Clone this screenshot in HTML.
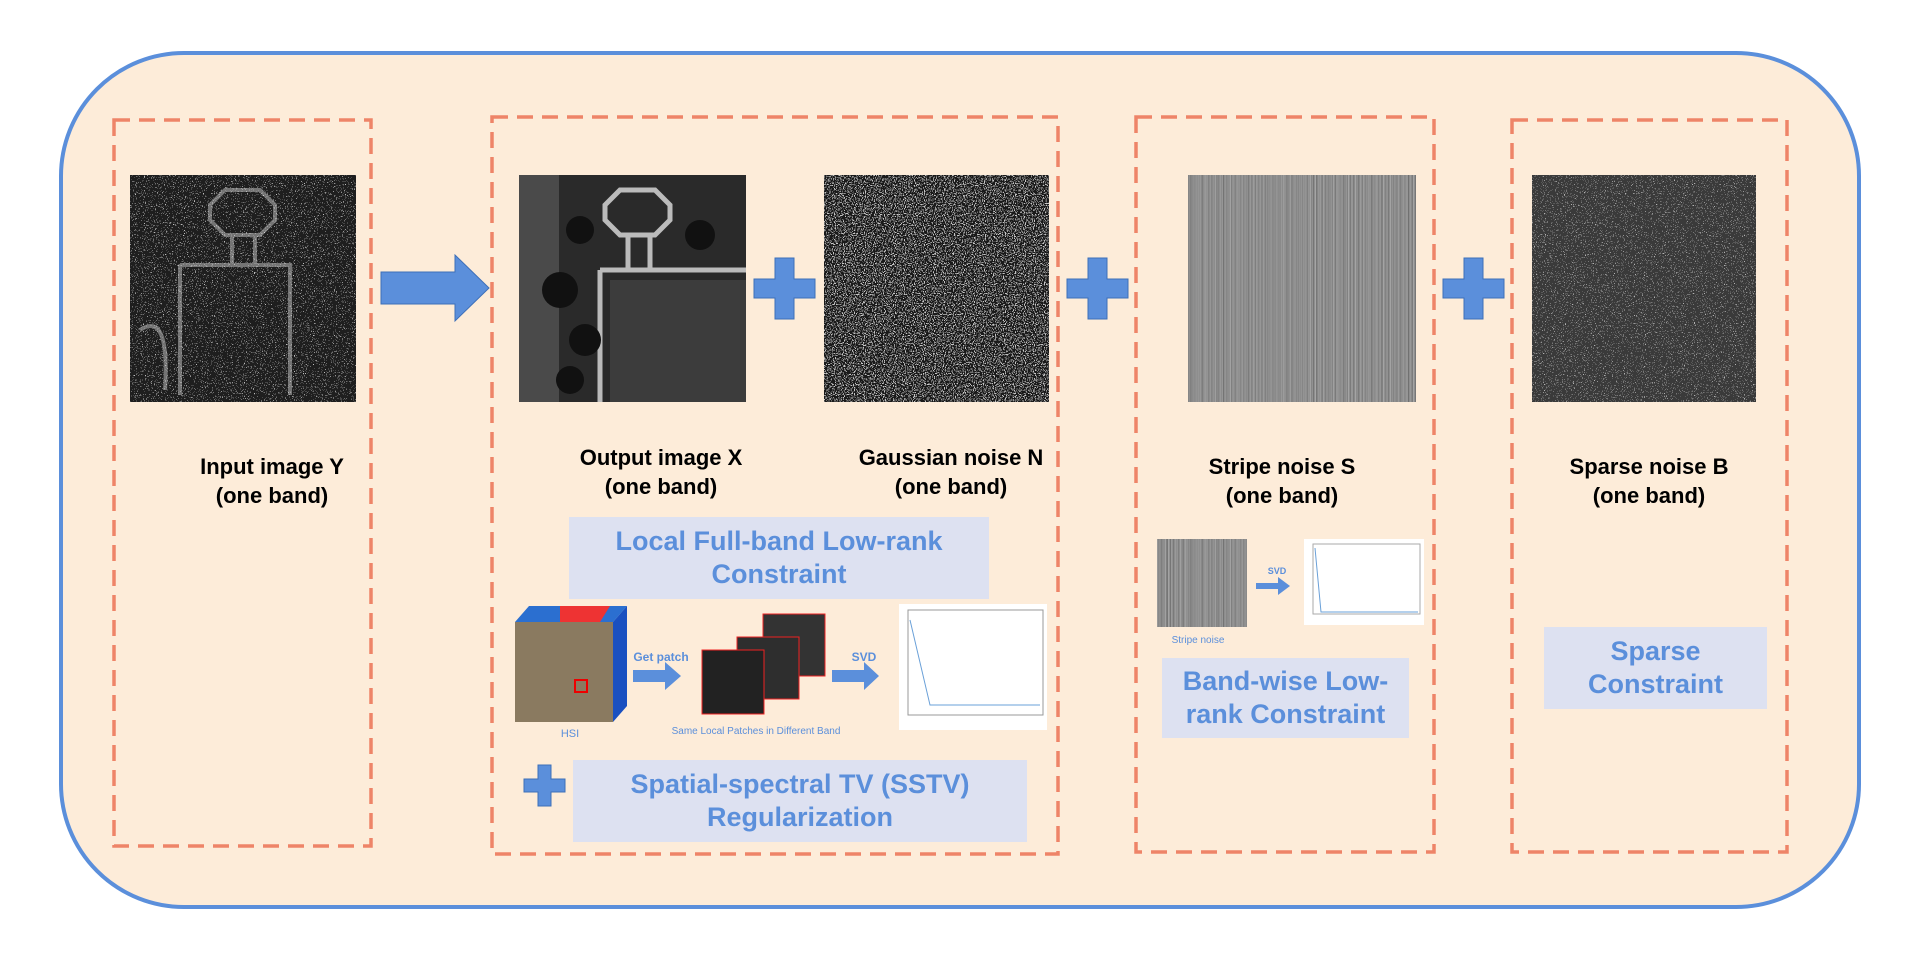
<!DOCTYPE html>
<html><head><meta charset="utf-8"><style>
*{margin:0;padding:0;box-sizing:border-box}
body{width:1920px;height:973px;background:#fff;position:relative;overflow:hidden;font-family:"Liberation Sans",Arial,sans-serif}
.a{position:absolute}
.outer{left:59px;top:51px;width:1802px;height:858px;background:#fdecd9;border:4px solid #5b8fdb;border-radius:125px}
.lbl{font-weight:bold;font-size:22px;color:#000;text-align:center;line-height:29px;width:300px}
.cb{background:#dde1f1;color:#5b8fdb;font-weight:bold;font-size:27px;text-align:center;line-height:33px;display:flex;align-items:center;justify-content:center}
</style></head><body>
<div class="a outer"></div>

<svg class="a" style="left:0;top:0" width="1920" height="973">
<defs>
<filter id="n1" x="0" y="0" width="100%" height="100%"><feTurbulence type="fractalNoise" baseFrequency="0.9" numOctaves="1" seed="3"/><feColorMatrix type="matrix" values="0 0 0 0 0 0 0 0 0 0 0 0 0 0 0 3 0 0 0 -1.2"/><feComponentTransfer><feFuncA type="discrete" tableValues="0 1"/></feComponentTransfer><feColorMatrix type="matrix" values="0 0 0 0 1 0 0 0 0 1 0 0 0 0 1 0 0 0 1 0"/></filter>
<filter id="n2" x="0" y="0" width="100%" height="100%"><feTurbulence type="fractalNoise" baseFrequency="0.9" numOctaves="1" seed="7"/><feColorMatrix type="matrix" values="0 0 0 0 0 0 0 0 0 0 0 0 0 0 0 4 0 0 0 -2.1"/><feComponentTransfer><feFuncA type="discrete" tableValues="0 1"/></feComponentTransfer><feColorMatrix type="matrix" values="0 0 0 0 0.8 0 0 0 0 0.8 0 0 0 0 0.8 0 0 0 1 0"/></filter>
<filter id="st" x="0" y="0" width="100%" height="100%"><feTurbulence type="fractalNoise" baseFrequency="0.6 0" numOctaves="2" seed="2"/><feColorMatrix type="matrix" values="0.5 0 0 0 0.02 0.5 0 0 0 0.02 0.5 0 0 0 0.02 0 0 0 0 1"/></filter>
</defs>
<g fill="none" stroke="#ee8468" stroke-width="3.5" stroke-dasharray="16 9">
<rect x="114" y="120" width="257" height="726"/>
<rect x="492" y="117" width="566" height="737"/>
<rect x="1136" y="117" width="298" height="735"/>
<rect x="1512" y="120" width="275" height="732"/>
</g>
<!-- input image -->
<rect x="130" y="175" width="226" height="227" fill="#1e1e1e"/>
<g stroke="#8a8a8a" fill="none" stroke-width="4" opacity="0.8">
<path d="M225 190 h35 l15 15 v15 l-15 15 h-35 l-15-15 v-15z"/><path d="M232 235 v30 M255 235 v30 M180 265 h110 v130 M180 265 v130"/><path d="M140 330 q30-20 25 60"/></g>
<rect x="130" y="175" width="226" height="227" filter="url(#n2)" opacity="0.8"/>
<!-- output image -->
<rect x="519" y="175" width="227" height="227" fill="#2a2a2a"/>
<rect x="519" y="175" width="40" height="227" fill="#4a4a4a"/>
<rect x="610" y="280" width="136" height="122" fill="#3c3c3c"/>
<g stroke="#bbb" fill="none" stroke-width="5">
<path d="M620 190 h35 l15 15 v15 l-15 15 h-35 l-15-15 v-15z"/><path d="M628 235 v35 M650 235 v35 M600 270 h146 M600 270 v132"/></g>
<g fill="#111"><circle cx="580" cy="230" r="14"/><circle cx="560" cy="290" r="18"/><circle cx="585" cy="340" r="16"/><circle cx="570" cy="380" r="14"/><circle cx="700" cy="235" r="15"/></g>
<!-- gaussian -->
<rect x="824" y="175" width="225" height="227" fill="#1a1a1a"/>
<rect x="824" y="175" width="225" height="227" filter="url(#n1)" opacity="0.75"/>
<!-- stripe -->
<rect x="1188" y="175" width="228" height="227" filter="url(#st)"/>
<!-- sparse -->
<rect x="1532" y="175" width="224" height="227" fill="#3a3a3a"/>
<rect x="1532" y="175" width="224" height="227" filter="url(#n2)" opacity="0.7"/>
<!-- big arrow -->
<path d="M381 272 h74 v-17 l34 33 l-34 33 v-17 h-74z" fill="#5b8fdb" stroke="#3d6fb8" stroke-width="1"/>
<!-- plus signs -->
<g fill="#5b8fdb" stroke="#3d6fb8" stroke-width="1">
<path d="M775 258 h19 v21 h21 v19 h-21 v21 h-19 v-21 h-21 v-19 h21z"/>
<path d="M1088 258 h19 v21 h21 v19 h-21 v21 h-19 v-21 h-21 v-19 h21z"/>
<path d="M1464 258 h19 v21 h21 v19 h-21 v21 h-19 v-21 h-21 v-19 h21z"/>
<path d="M538 765 h13 v14 h14 v13 h-14 v14 h-13 v-14 h-14 v-13 h14z"/>
</g>
<!-- HSI cube -->
<rect x="515" y="622" width="98" height="100" fill="#8a7a60"/>
<path d="M515 622 l14-16 h98 l-14 16z" fill="#2b6fd0"/>
<path d="M613 622 l14-16 v100 l-14 16z" fill="#1a50c0"/>
<path d="M560 606 h50 l-10 16 h-40z" fill="#e33"/>
<rect x="575" y="680" width="12" height="12" fill="none" stroke="#e00" stroke-width="2"/>
<text x="570" y="737" font-size="11" fill="#5b8fdb" text-anchor="middle" font-family="Liberation Sans">HSI</text>
<text x="661" y="661" font-size="12" font-weight="bold" fill="#5b8fdb" text-anchor="middle" font-family="Liberation Sans">Get patch</text>
<path d="M633 670 h32 v-8 l16 14 l-16 14 v-8 h-32z" fill="#5b8fdb"/>
<rect x="763" y="614" width="62" height="62" fill="#333" stroke="#e22"/>
<rect x="737" y="637" width="62" height="62" fill="#2e2e2e" stroke="#e22"/>
<rect x="702" y="650" width="62" height="64" fill="#222" stroke="#e22"/>
<text x="756" y="734" font-size="10" fill="#5b8fdb" text-anchor="middle" font-family="Liberation Sans">Same Local Patches in Different Band</text>
<text x="864" y="661" font-size="12" font-weight="bold" fill="#5b8fdb" text-anchor="middle" font-family="Liberation Sans">SVD</text>
<path d="M832 670 h32 v-8 l15 14 l-15 14 v-8 h-32z" fill="#5b8fdb"/>
<rect x="899" y="604" width="148" height="126" fill="#fff"/>
<rect x="908" y="610" width="135" height="105" fill="none" stroke="#999"/>
<path d="M910 620 l20 85 h110" fill="none" stroke="#6aa0d8"/>
<!-- stripe small -->
<rect x="1157" y="539" width="90" height="88" filter="url(#st)"/>
<text x="1198" y="643" font-size="10" fill="#5b8fdb" text-anchor="middle" font-family="Liberation Sans">Stripe noise</text>
<text x="1277" y="574" font-size="9" font-weight="bold" fill="#5b8fdb" text-anchor="middle" font-family="Liberation Sans">SVD</text>
<path d="M1256 583 h22 v-6 l12 9 l-12 9 v-6 h-22z" fill="#5b8fdb"/>
<rect x="1304" y="539" width="120" height="86" fill="#fff"/>
<rect x="1313" y="544" width="107" height="70" fill="none" stroke="#aaa"/>
<path d="M1315 548 l6 64 h97" fill="none" stroke="#6aa0d8"/>
</svg>

<div class="a lbl" style="left:122px;top:452px">Input image Y<br>(one band)</div>
<div class="a lbl" style="left:511px;top:443px">Output image X<br>(one band)</div>
<div class="a lbl" style="left:801px;top:443px">Gaussian noise N<br>(one band)</div>
<div class="a lbl" style="left:1132px;top:452px">Stripe noise S<br>(one band)</div>
<div class="a lbl" style="left:1499px;top:452px">Sparse noise B<br>(one band)</div>

<div class="a cb" style="left:569px;top:517px;width:420px;height:82px">Local Full-band Low-rank<br>Constraint</div>
<div class="a cb" style="left:573px;top:760px;width:454px;height:82px">Spatial-spectral TV (SSTV)<br>Regularization</div>
<div class="a cb" style="left:1162px;top:658px;width:247px;height:80px">Band-wise Low-<br>rank Constraint</div>
<div class="a cb" style="left:1544px;top:627px;width:223px;height:82px">Sparse<br>Constraint</div>
</body></html>
